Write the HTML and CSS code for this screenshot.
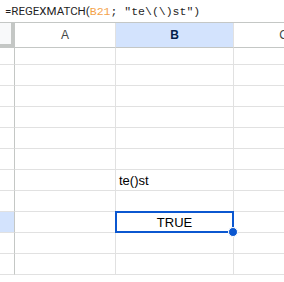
FILE: index.html
```html
<!DOCTYPE html>
<html lang="en">
<head>
  <meta charset="UTF-8">
  <title>Sheet</title>
  <link rel="stylesheet" href="styles.css">
</head>
<body>
  <div class="formula-bar">
    <span class="fn">=REGEXMATCH(</span><span class="mono ref">B21</span><span class="mono">; "te\(\)st")</span>
  </div>

  <div class="grid">
    <div class="corner"></div>
    <div class="col-head">A</div>
    <div class="col-head active">B</div>
    <div class="col-head">C</div>

    <div class="row-head"></div><div class="cell"></div><div class="cell"></div><div class="cell"></div>
    <div class="row-head"></div><div class="cell"></div><div class="cell"></div><div class="cell"></div>
    <div class="row-head"></div><div class="cell"></div><div class="cell"></div><div class="cell"></div>
    <div class="row-head"></div><div class="cell"></div><div class="cell"></div><div class="cell"></div>
    <div class="row-head"></div><div class="cell"></div><div class="cell"></div><div class="cell"></div>
    <div class="row-head"></div><div class="cell"></div><div class="cell"></div><div class="cell"></div>
    <div class="row-head"></div><div class="cell"></div><div class="cell">te()st</div><div class="cell"></div>
    <div class="row-head"></div><div class="cell"></div><div class="cell"></div><div class="cell"></div>
    <div class="row-head active"></div><div class="cell"></div><div class="cell center selected">TRUE<span class="handle"></span></div><div class="cell"></div>
    <div class="row-head"></div><div class="cell"></div><div class="cell"></div><div class="cell"></div>
    <div class="row-head"></div><div class="cell"></div><div class="cell"></div><div class="cell"></div>
  </div>
</body>
</html>
```

FILE: styles.css
```css
body { margin:0; background:#fff; font-family:"Liberation Sans", Arial, sans-serif; color:#000; overflow:hidden; }

.formula-bar { height:22px; border-bottom:1px solid #c4c7c5; padding-left:5px; display:flex; align-items:center; color:#1f1f1f; white-space:nowrap; }
.fn { font-family:Roboto, "Liberation Sans", sans-serif; font-size:11.5px; }
.mono { font-family:"Liberation Mono", monospace; font-size:11.5px; }
.ref { color:#f4a24a; }

.grid { display:grid; grid-template-columns:15px 101px 118px 100px; grid-template-rows:25px 17px repeat(10, 21px); }
.grid > div { box-sizing:border-box; border-right:1px solid #e1e1e1; border-bottom:1px solid #e1e1e1; }

.corner { background:#f8f9fa; border-right:4px solid #c4c7c5 !important; border-bottom:4px solid #c4c7c5 !important; }
.col-head { display:flex; align-items:center; justify-content:center; font-size:12px; color:#444746; border-bottom-color:#c4c7c5 !important; }
.col-head.active { background:#d3e3fd; font-weight:bold; color:#041e49; }
.row-head { border-right-color:#c4c7c5 !important; }
.row-head.active { background:#d3e3fd; }

.cell { font-size:13px; padding:0 3px; display:flex; align-items:center; }
.cell.center { justify-content:center; }
.selected { position:relative; }
.selected::after { content:""; position:absolute; left:-1px; top:-1px; right:-1px; bottom:-1px; border:2px solid #0b57d0; }
.handle { position:absolute; right:-5px; bottom:-5px; width:8px; height:8px; border-radius:50%; background:#0b57d0; border:1px solid #fff; z-index:1; }
```
